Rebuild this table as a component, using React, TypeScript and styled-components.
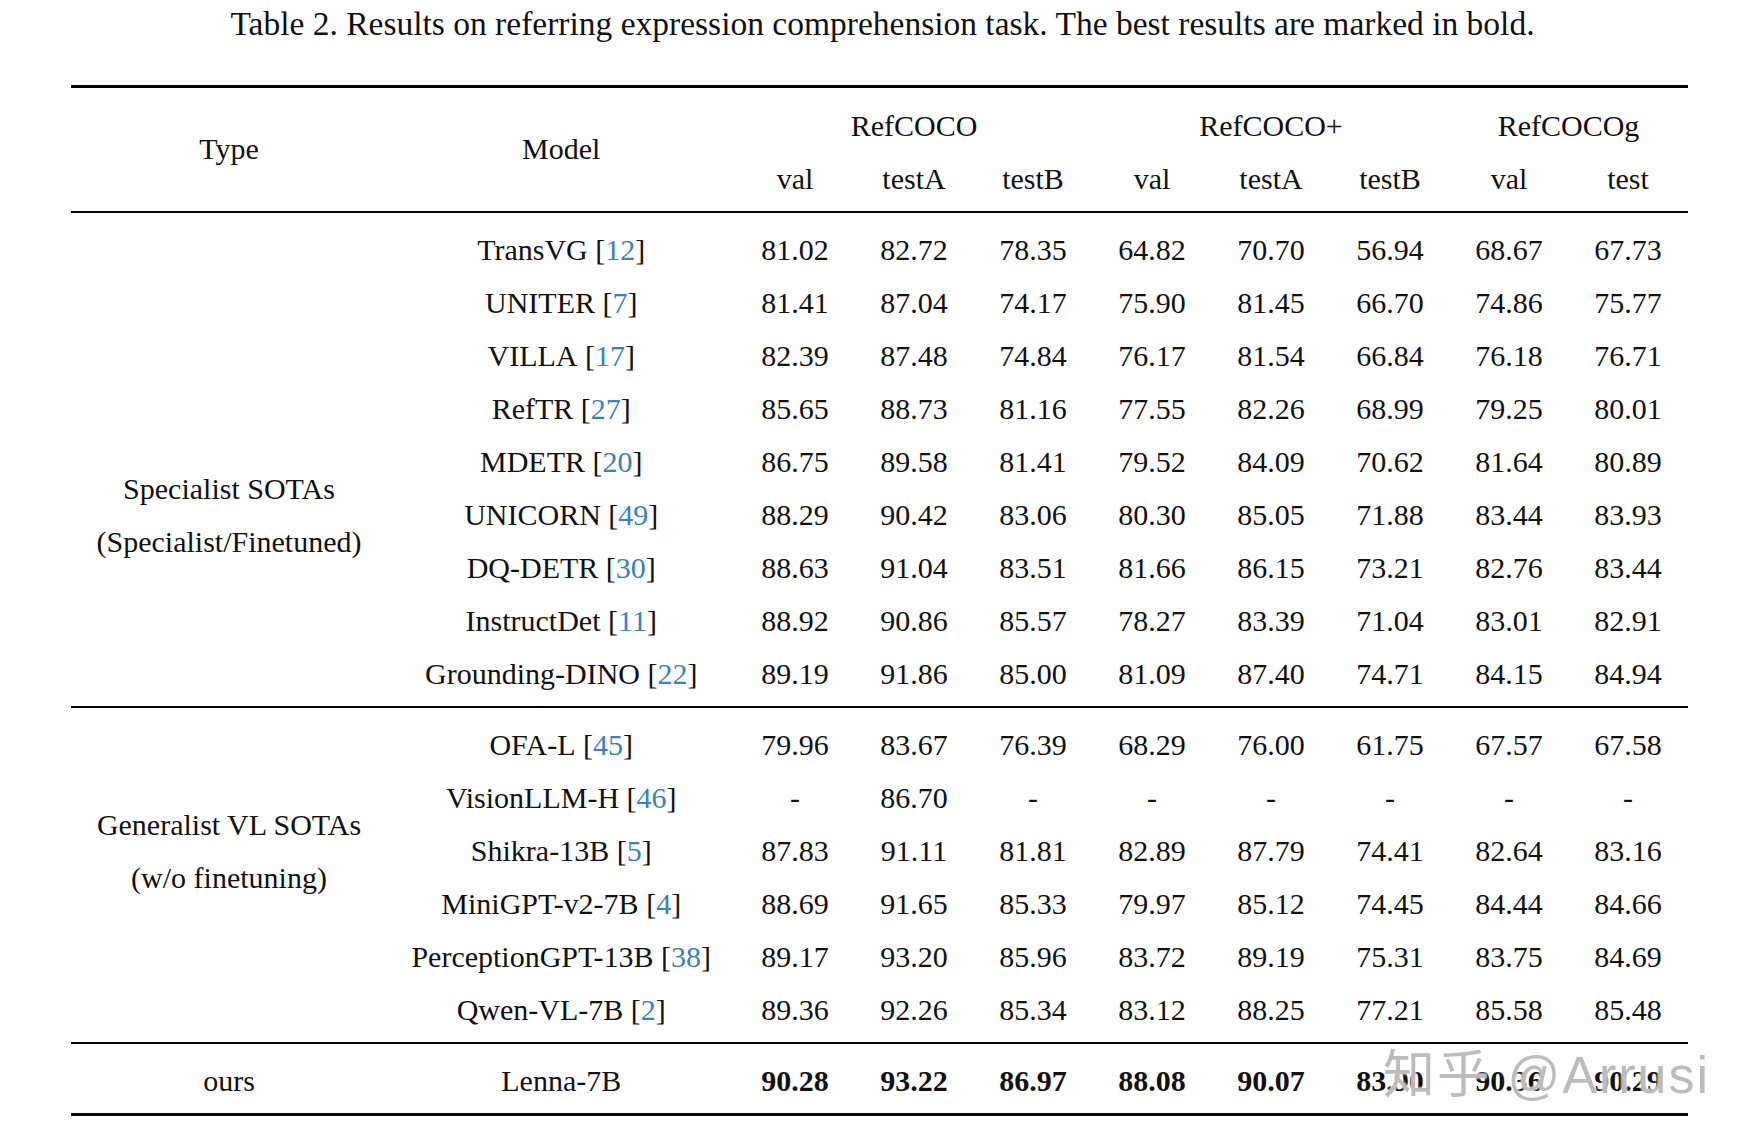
import styled, { createGlobalStyle } from 'styled-components';

const GlobalStyle = createGlobalStyle`
    html, body {
        margin: 0;
        padding: 0;
        background: #ffffff;
    }
    body {
        font-family: "Liberation Serif", "Times New Roman", serif;
        color: #111111;
    }
`

const Page = styled.div`
    width: 1750px;
    height: 1142px;
    padding: 4px 0 0 71px;
    box-sizing: border-box;
    overflow: hidden;
`

const Caption = styled.div`
    width: 1623px;
    text-align: center;
    font-size: 33.5px;
    line-height: 40px;
    margin-bottom: 41px;
`

const Table = styled.div`
    width: 1617px;
    font-size: 30px;
`

const Section = styled.div<{ $rule: number }>`
    position: relative;
    display: grid;
    grid-template-columns: 316px 348.5px repeat(8, 119px);
    grid-auto-rows: 53px;
    padding: 10.5px 0 5.5px;
    border-bottom: ${p => p.$rule}px solid #000;
`

const Head = styled(Section)`
    border-top: 3px solid #000;
    padding-bottom: 6px;
`

const Cell = styled.div<{ $bold?: boolean }>`
    display: flex;
    align-items: center;
    justify-content: center;
    line-height: 53px;
    white-space: nowrap;
    font-weight: ${p => (p.$bold ? 700 : 400)};
`

const Span = styled(Cell)<{ $from: number; $to: number }>`
    grid-column: ${p => p.$from} / ${p => p.$to};
    grid-row: 1;
`

const Tall = styled(Cell)<{ $col: number }>`
    grid-column: ${p => p.$col};
    grid-row: 1 / 3;
    padding-bottom: 6px;
`

const TypeCell = styled.div<{ $rows: number; $offset: number }>`
    grid-column: 1;
    grid-row: 1 / span ${p => p.$rows};
    display: flex;
    flex-direction: column;
    align-items: center;
    padding-top: ${p => p.$offset * 53}px;
    line-height: 53px;
`

const Cite = styled.span`
    color: #3682bd;
`

const Watermark = styled.div`
    position: absolute;
    left: 1312px;
    top: -1px;
    font-family: "Liberation Sans", "Noto Sans CJK SC", sans-serif;
    font-size: 52px;
    line-height: 64px;
    letter-spacing: 2px;
    color: rgba(160, 160, 160, 0.7);
    text-shadow: 0 0 2px #fff, 0 0 3px #fff;
    white-space: nowrap;
    pointer-events: none;
`

type Row = [string, string, ...string[]]

const specialists: Row[] = [
    ['TransVG', '12', '81.02', '82.72', '78.35', '64.82', '70.70', '56.94', '68.67', '67.73'],
    ['UNITER', '7', '81.41', '87.04', '74.17', '75.90', '81.45', '66.70', '74.86', '75.77'],
    ['VILLA', '17', '82.39', '87.48', '74.84', '76.17', '81.54', '66.84', '76.18', '76.71'],
    ['RefTR', '27', '85.65', '88.73', '81.16', '77.55', '82.26', '68.99', '79.25', '80.01'],
    ['MDETR', '20', '86.75', '89.58', '81.41', '79.52', '84.09', '70.62', '81.64', '80.89'],
    ['UNICORN', '49', '88.29', '90.42', '83.06', '80.30', '85.05', '71.88', '83.44', '83.93'],
    ['DQ-DETR', '30', '88.63', '91.04', '83.51', '81.66', '86.15', '73.21', '82.76', '83.44'],
    ['InstructDet', '11', '88.92', '90.86', '85.57', '78.27', '83.39', '71.04', '83.01', '82.91'],
    ['Grounding-DINO', '22', '89.19', '91.86', '85.00', '81.09', '87.40', '74.71', '84.15', '84.94'],
]

const generalists: Row[] = [
    ['OFA-L', '45', '79.96', '83.67', '76.39', '68.29', '76.00', '61.75', '67.57', '67.58'],
    ['VisionLLM-H', '46', '-', '86.70', '-', '-', '-', '-', '-', '-'],
    ['Shikra-13B', '5', '87.83', '91.11', '81.81', '82.89', '87.79', '74.41', '82.64', '83.16'],
    ['MiniGPT-v2-7B', '4', '88.69', '91.65', '85.33', '79.97', '85.12', '74.45', '84.44', '84.66'],
    ['PerceptionGPT-13B', '38', '89.17', '93.20', '85.96', '83.72', '89.19', '75.31', '83.75', '84.69'],
    ['Qwen-VL-7B', '2', '89.36', '92.26', '85.34', '83.12', '88.25', '77.21', '85.58', '85.48'],
]

const ours = ['90.28', '93.22', '86.97', '88.08', '90.07', '83.90', '90.36', '90.29']

const splits = ['val', 'testA', 'testB', 'val', 'testA', 'testB', 'val', 'test']

function ModelRows({ rows }: { rows: Row[] }) {
    return (
        <>
            {rows.map(([name, ref, ...scores]) => [
                <Cell key={name}>{name}&nbsp;[<Cite>{ref}</Cite>]</Cell>,
                ...scores.map((s, i) => <Cell key={name + i}>{s}</Cell>),
            ])}
        </>
    )
}

export default function App() {
    return (
        <Page>
            <GlobalStyle />
            <Caption>
                Table 2. Results on referring expression comprehension task. The best results are marked in bold.
            </Caption>
            <Table>
                <Head $rule={2}>
                    <Tall $col={1}>Type</Tall>
                    <Tall $col={2}>Model</Tall>
                    <Span $from={3} $to={6}>RefCOCO</Span>
                    <Span $from={6} $to={9}>RefCOCO+</Span>
                    <Span $from={9} $to={11}>RefCOCOg</Span>
                    {splits.map((s, i) => <Cell key={i}>{s}</Cell>)}
                </Head>
                <Section $rule={2}>
                    <TypeCell $rows={specialists.length} $offset={4.5}>
                        <span>Specialist SOTAs</span>
                        <span>(Specialist/Finetuned)</span>
                    </TypeCell>
                    <ModelRows rows={specialists} />
                </Section>
                <Section $rule={2.5}>
                    <TypeCell $rows={generalists.length} $offset={1.5}>
                        <span>Generalist VL SOTAs</span>
                        <span>(w/o finetuning)</span>
                    </TypeCell>
                    <ModelRows rows={generalists} />
                </Section>
                <Section $rule={3}>
                    <Cell>ours</Cell>
                    <Cell>Lenna-7B</Cell>
                    {ours.map((s, i) => <Cell key={i} $bold>{s}</Cell>)}
                    <Watermark>知乎 @Arrusi</Watermark>
                </Section>
            </Table>
        </Page>
    )
}
